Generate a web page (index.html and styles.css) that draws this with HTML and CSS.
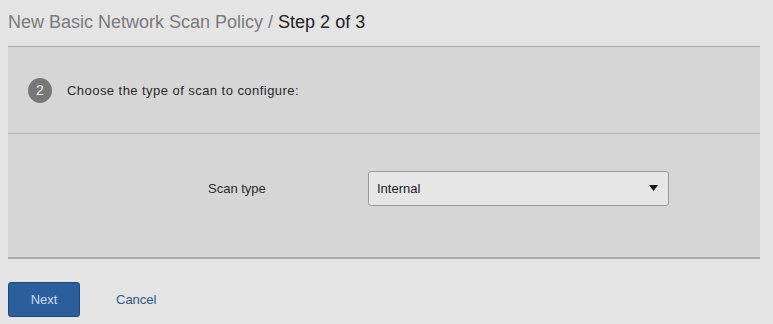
FILE: index.html
```html
<!DOCTYPE html>
<html>
<head>
<meta charset="utf-8">
<link rel="stylesheet" href="styles.css">
</head>
<body>
<div class="page">
  <h1 class="title"><span class="crumb">New Basic Network Scan Policy / </span><span class="step">Step 2 of 3</span></h1>
  <div class="panel">
    <div class="step-row">
      <span class="badge">2</span>
      <span class="prompt">Choose the type of scan to configure:</span>
    </div>
    <div class="field-row">
      <label class="label">Scan type</label>
      <div class="select">
        <span class="value">Internal</span>
        <svg class="caret" width="9" height="6" viewBox="0 0 9 6"><path d="M0 0 H9 L4.5 6 Z" fill="#1a1a1a"/></svg>
      </div>
    </div>
  </div>
  <div class="actions">
    <button class="btn-next">Next</button>
    <a class="cancel">Cancel</a>
  </div>
</div>
</body>
</html>
```
FILE: styles.css
```css
html, body {
  margin: 0;
  padding: 0;
  background: #e4e4e4;
  font-family: "Liberation Sans", Arial, sans-serif;
}
.page {
  padding: 0 13px 0 8px;
}
.title {
  margin: 0;
  height: 46px;
  display: flex;
  align-items: center;
  font-weight: normal;
  font-size: 18px;
  padding-bottom: 2px;
  box-sizing: border-box;
}
.crumb { color: #7a7a7a; white-space: pre; }
.step { color: #222; }
.panel {
  background: #d6d6d6;
  border-top: 1px solid #a8a8a8;
  border-bottom: 2px solid #a8a8a8;
}
.step-row {
  height: 87px;
  display: flex;
  align-items: center;
  padding-left: 20px;
  border-bottom: 1px solid #b0b0b0;
  box-sizing: border-box;
}
.badge {
  width: 24px;
  height: 25px;
  border-radius: 50%;
  background: #777;
  color: #f0f0f0;
  font-size: 14px;
  display: flex;
  align-items: center;
  justify-content: center;
  margin-right: 15px;
}
.prompt {
  font-size: 13px;
  color: #2a2a2a;
  letter-spacing: 0.45px;
}
.field-row {
  height: 123px;
  display: flex;
  align-items: center;
  padding-bottom: 15px;
  box-sizing: border-box;
}
.label {
  font-size: 13px;
  color: #2a2a2a;
  margin-left: 200px;
  width: 160px;
}
.select {
  width: 301px;
  height: 35px;
  box-sizing: border-box;
  border: 1px solid #9a9a9a;
  border-radius: 3px;
  background: #e6e6e6;
  display: flex;
  align-items: center;
  justify-content: space-between;
  padding: 0 10px 0 8px;
}
.value { font-size: 13px; color: #222; }
.actions {
  display: flex;
  align-items: center;
  margin-top: 23px;
}
.btn-next {
  width: 72px;
  height: 35px;
  background: #2a5f9c;
  border: 1px solid #1d4a7e;
  border-radius: 3px;
  color: #c9dcf0;
  font-family: "Liberation Sans", Arial, sans-serif;
  font-size: 13px;
  padding: 0;
}
.cancel {
  margin-left: 36px;
  color: #2b5a88;
  font-size: 13px;
}
```
